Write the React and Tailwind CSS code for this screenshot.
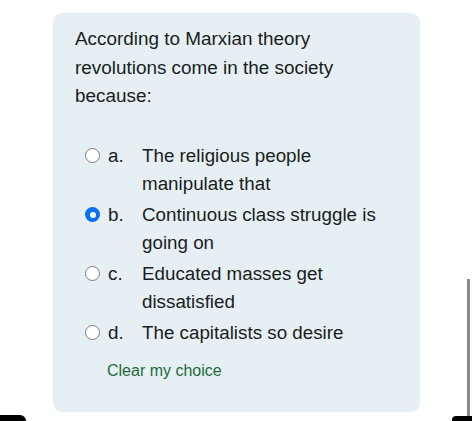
import { useState } from "react";

const options = [
  { key: "a", lines: ["The religious people", "manipulate that"] },
  { key: "b", lines: ["Continuous class struggle is", "going on"] },
  { key: "c", lines: ["Educated masses get", "dissatisfied"] },
  { key: "d", lines: ["The capitalists so desire"] },
];

function Radio({ checked }) {
  if (checked) {
    return (
      <span className="mt-[6.5px] flex h-[15px] w-[15px] shrink-0 items-center justify-center rounded-full bg-[#0b6ff2]">
        <span className="h-[6px] w-[6px] rounded-full bg-white" />
      </span>
    );
  }
  return (
    <span className="mt-[6.5px] h-[15px] w-[15px] shrink-0 rounded-full border-[1.5px] border-[#7d7d7d] bg-white" />
  );
}

export default function App() {
  const [choice, setChoice] = useState("b");

  return (
    <div
      className="relative h-[421px] w-[474px] overflow-hidden bg-white"
      style={{ fontFamily: '"Liberation Sans", Arial, sans-serif' }}
    >
      <div className="ml-[53px] mt-[13px] h-[399px] w-[367px] rounded-[9px] bg-[#e6f0f4] pl-[22px] pr-4 pt-[12px]">
        <p className="text-[18.9px] leading-[28.5px] text-[#1a1d21]">
          According to Marxian theory
          <br />
          revolutions come in the society
          <br />
          because:
        </p>

        <div className="mt-[31px] flex flex-col gap-[3px] pl-[10px]">
          {options.map((o) => (
            <label
              key={o.key}
              className="flex cursor-pointer items-start text-[18.8px] leading-[28px] text-[#1a1d21]"
              onClick={() => setChoice(o.key)}
            >
              <Radio checked={choice === o.key} />
              <span className="ml-[8px] w-[34px] shrink-0">{o.key}.</span>
              <span>
                {o.lines.map((l) => (
                  <span key={l} className="block">
                    {l}
                  </span>
                ))}
              </span>
            </label>
          ))}
        </div>

        <button
          className="ml-[32px] mt-[12px] text-[16px] leading-[24px] text-[#1e6b37]"
          onClick={() => setChoice(null)}
        >
          Clear my choice
        </button>
      </div>

      {/* screenshot edge artifacts */}
      <div className="absolute left-[467px] top-[279px] h-[140px] w-[3px] bg-[#8a8a8a]" />
      <div className="absolute left-[452px] top-[416px] h-[6px] w-[20px] rounded-tl-[4px] bg-black" />
      <div className="absolute left-0 top-[415px] h-[6px] w-[26px] rounded-tr-[6px] bg-black" />
    </div>
  );
}
